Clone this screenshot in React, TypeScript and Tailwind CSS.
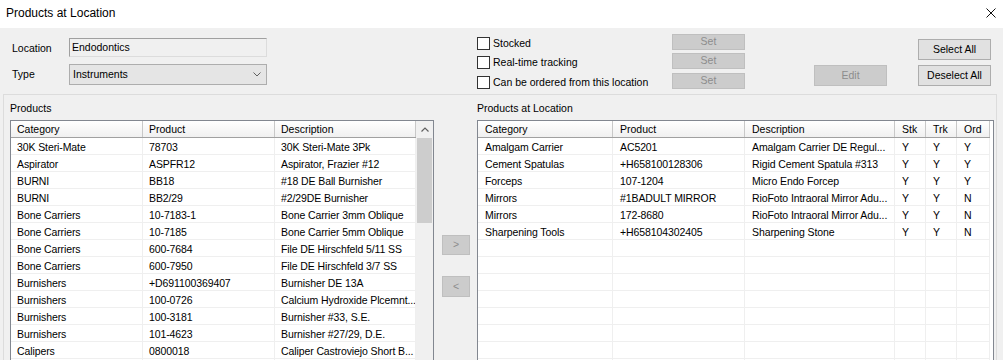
import React from 'react'

const leftCols = ['w-[132px]', 'w-[132px]', 'w-[141px]']
const rightCols = ['w-[135px]', 'w-[132px]', 'w-[150px]', 'w-[31px]', 'w-[31px]', 'w-[33px]']

const leftRows: string[][] = [
  ['30K Steri-Mate', '78703', '30K Steri-Mate 3Pk'],
  ['Aspirator', 'ASPFR12', 'Aspirator, Frazier #12'],
  ['BURNI', 'BB18', '#18 DE Ball Burnisher'],
  ['BURNI', 'BB2/29', '#2/29DE Burnisher'],
  ['Bone Carriers', '10-7183-1', 'Bone Carrier 3mm Oblique'],
  ['Bone Carriers', '10-7185', 'Bone Carrier 5mm Oblique'],
  ['Bone Carriers', '600-7684', 'File DE Hirschfeld 5/11 SS'],
  ['Bone Carriers', '600-7950', 'File DE Hirschfeld 3/7 SS'],
  ['Burnishers', '+D691100369407', 'Burnisher DE 13A'],
  ['Burnishers', '100-0726', 'Calcium Hydroxide Plcemnt...'],
  ['Burnishers', '100-3181', 'Burnisher #33, S.E.'],
  ['Burnishers', '101-4623', 'Burnisher #27/29, D.E.'],
  ['Calipers', '0800018', 'Caliper Castroviejo Short B...'],
  ['', '', ''],
]

const rightRows: string[][] = [
  ['Amalgam Carrier', 'AC5201', 'Amalgam Carrier DE Regul...', 'Y', 'Y', 'Y'],
  ['Cement Spatulas', '+H658100128306', 'Rigid Cement Spatula #313', 'Y', 'Y', 'Y'],
  ['Forceps', '107-1204', 'Micro Endo Forcep', 'Y', 'Y', 'Y'],
  ['Mirrors', '#1BADULT MIRROR', 'RioFoto Intraoral Mirror Adu...', 'Y', 'Y', 'N'],
  ['Mirrors', '172-8680', 'RioFoto Intraoral Mirror Adu...', 'Y', 'Y', 'N'],
  ['Sharpening Tools', '+H658104302405', 'Sharpening Stone', 'Y', 'Y', 'N'],
  ['', '', '', '', '', ''],
  ['', '', '', '', '', ''],
  ['', '', '', '', '', ''],
  ['', '', '', '', '', ''],
  ['', '', '', '', '', ''],
  ['', '', '', '', '', ''],
  ['', '', '', '', '', ''],
  ['', '', '', '', '', ''],
]

function Header({ labels, cols, pad }: { labels: string[]; cols: string[]; pad: string }) {
  return (
    <div className="flex h-[17px] border-b border-[#a0a0a0] bg-linear-to-b from-white to-[#f0f0f0]">
      {labels.map((l, i) => (
        <div
          key={i}
          className={`${cols[i]} ${pad} shrink-0 h-full border-r border-[#c8c8c8] leading-[17px] whitespace-nowrap overflow-hidden`}
        >
          {l}
        </div>
      ))}
    </div>
  )
}

function Row({ cells, cols, pad }: { cells: string[]; cols: string[]; pad: string }) {
  return (
    <div className="flex h-[17px]">
      {cells.map((c, i) => (
        <div
          key={i}
          className={`${cols[i]} ${pad} shrink-0 h-full border-r border-b border-[#efefef] leading-[18px] tracking-[-0.1px] whitespace-nowrap overflow-hidden`}
        >
          {c}
        </div>
      ))}
    </div>
  )
}

function Checkbox({ label, className }: { label: string; className?: string }) {
  return (
    <div className={`flex items-center h-[13px] ${className ?? ''}`}>
      <div className="w-[13px] h-[13px] border border-[#333333] bg-white shrink-0" />
      <span className="ml-[3px] leading-[13px] whitespace-nowrap">{label}</span>
    </div>
  )
}

function WinButton({
  label,
  disabled,
  className,
}: {
  label: string
  disabled?: boolean
  className?: string
}) {
  return (
    <div
      className={`flex items-center justify-center border ${
        disabled
          ? 'bg-[#cccccc] border-[#bfbfbf] text-[#8d8d8d]'
          : 'bg-[#e1e1e1] border-[#adadad] text-black'
      } ${className ?? ''}`}
    >
      {label}
    </div>
  )
}

export default function App() {
  return (
    <div className="w-[1003px] h-[360px] overflow-hidden flex flex-col bg-[#f0f0f0] text-black text-[10.5px] font-['Liberation_Sans',Arial,sans-serif]">
      {/* Title bar */}
      <div className="h-[28px] shrink-0 bg-white flex items-center justify-between pl-[6px] pr-[7px]">
        <span className="text-[12px] leading-[14px] -mt-[2px]">Products at Location</span>
        <svg width="10" height="10" viewBox="0 0 10 10" className="-mt-[2px]">
          <path d="M0.5 0.5 L9.5 9.5 M9.5 0.5 L0.5 9.5" stroke="#111" strokeWidth="1" />
        </svg>
      </div>

      {/* Top fields */}
      <div className="h-[66px] shrink-0 flex pl-[12px]">
        <div className="w-[255px] shrink-0 flex flex-col pt-[10px]">
          <div className="flex items-center h-[19px]">
            <span className="w-[57px] shrink-0 pt-[2px]">Location</span>
            <div className="w-[198px] h-[19px] border border-t-[#a0a0a0] border-l-[#a0a0a0] border-b-[#dcdcdc] border-r-[#dcdcdc] bg-[#f0f0f0] pl-[2px] leading-[16px]">
              Endodontics
            </div>
          </div>
          <div className="flex items-center h-[21px] mt-[7px]">
            <span className="w-[57px] shrink-0">Type</span>
            <div className="w-[198px] h-[21px] border border-[#adadad] bg-[#e5e5e5] pl-[3px] flex items-center justify-between pr-[5px]">
              <span>Instruments</span>
              <svg width="8" height="5" viewBox="0 0 8 5">
                <path d="M0.5 0.5 L4 4 L7.5 0.5" stroke="#606060" fill="none" strokeWidth="1" />
              </svg>
            </div>
          </div>
        </div>

        <div className="ml-[210px] w-[195px] shrink-0 flex flex-col pt-[9px]">
          <Checkbox label="Stocked" />
          <Checkbox label="Real-time tracking" className="mt-[6px]" />
          <Checkbox label="Can be ordered from this location" className="mt-[7px]" />
        </div>

        <div className="w-[73px] shrink-0 flex flex-col pt-[6px]">
          <WinButton label="Set" disabled className="h-[16px]" />
          <WinButton label="Set" disabled className="h-[16px] mt-[3px]" />
          <WinButton label="Set" disabled className="h-[16px] mt-[4px]" />
        </div>

        <div className="ml-[69px] w-[73px] shrink-0 flex flex-col pt-[37px]">
          <WinButton label="Edit" disabled className="h-[21px]" />
        </div>

        <div className="ml-[31px] w-[73px] shrink-0 flex flex-col pt-[11px]">
          <WinButton label="Select All" className="h-[21px]" />
          <WinButton label="Deselect All" className="h-[21px] mt-[5px]" />
        </div>
      </div>

      {/* Lists panel */}
      <div className="ml-[3px] w-[994px] flex-1 border border-[#dcdcdc] flex">
        {/* Products */}
        <div className="ml-[6px] w-[424px] shrink-0 flex flex-col">
          <div className="h-[25px] shrink-0 pt-[7px] leading-[13px]">Products</div>
          <div className="flex-1 border border-[#828790] bg-white flex overflow-hidden">
            <div className="w-[405px] shrink-0 flex flex-col">
              <Header labels={['Category', 'Product', 'Description']} cols={leftCols} pad="pl-[6px]" />
              {leftRows.map((r, i) => (
                <Row key={i} cells={r} cols={leftCols} pad="pl-[6px]" />
              ))}
            </div>
            <div className="w-[17px] shrink-0 bg-[#f0f0f0] flex flex-col items-center">
              <div className="h-[17px] w-full flex items-center justify-center">
                <svg width="8" height="5" viewBox="0 0 8 5">
                  <path d="M0.5 4.5 L4 1 L7.5 4.5" stroke="#606060" fill="none" strokeWidth="1.2" />
                </svg>
              </div>
              <div className="w-[15px] h-[85px] bg-[#cdcdcd]" />
            </div>
          </div>
        </div>

        {/* Move buttons */}
        <div className="ml-[8px] w-[28px] shrink-0 flex flex-col pt-[140px]">
          <WinButton label=">" disabled className="h-[20px]" />
          <WinButton label="<" disabled className="h-[21px] mt-[21px]" />
        </div>

        {/* Products at Location */}
        <div className="ml-[7px] w-[517px] shrink-0 flex flex-col">
          <div className="h-[25px] shrink-0 pt-[7px] leading-[13px]">Products at Location</div>
          <div className="flex-1 border border-[#828790] bg-white overflow-hidden">
            <div className="w-[512px] flex flex-col">
              <Header
                labels={['Category', 'Product', 'Description', 'Stk', 'Trk', 'Ord']}
                cols={rightCols}
                pad="pl-[7px]"
              />
              {rightRows.map((r, i) => (
                <Row key={i} cells={r} cols={rightCols} pad="pl-[7px]" />
              ))}
            </div>
          </div>
        </div>
      </div>
    </div>
  )
}
